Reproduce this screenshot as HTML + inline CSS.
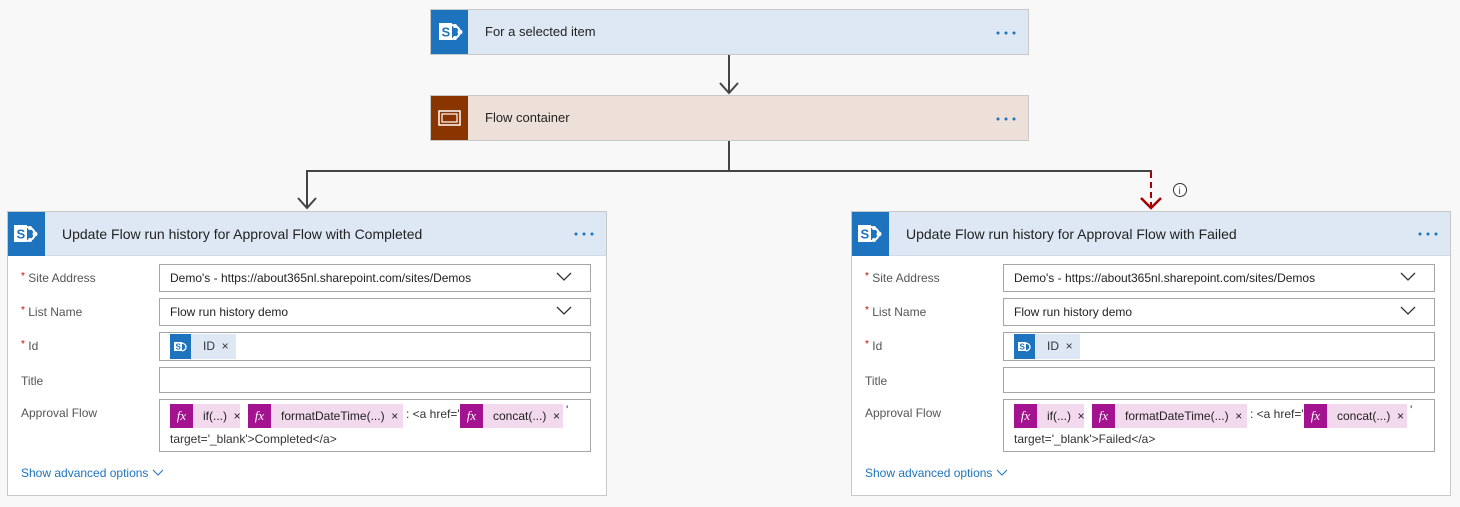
<!DOCTYPE html>
<html><head><meta charset="utf-8"><style>
*{margin:0;padding:0;box-sizing:border-box}
body{width:1460px;height:507px;background:#f8f8f8;position:relative;overflow:hidden;font-family:"Segoe UI","Liberation Sans",sans-serif;color:#333;font-size:12px}
.a{position:absolute}
.card{position:absolute;background:#fff;border:1px solid #c8c8c8}
.hdr{position:absolute;left:0;top:0;right:0;height:44px;background:#dde8f4;border-bottom:1px solid #d0dbe6}
.ic{position:absolute;left:0;top:0;width:37px;height:44px;background:#1e73be}
.ttl{position:absolute;left:54px;top:14px;font-size:14px;color:#222}
.dots{position:absolute;right:12px;top:20px;width:20px;height:4px}
.lbl{position:absolute;left:13px;font-size:12px;color:#555}
.lbl b{color:#c00;font-weight:normal;font-size:10px;vertical-align:top}
.inp{position:absolute;left:151px;width:432px;border:1px solid #a6a6a6;background:#fff}
.inp span.t{position:absolute;left:10px;top:6px;font-size:12px;color:#222}
.chev{position:absolute;right:18px;top:6px}
.chip{position:absolute;top:4px;height:24px;}
.fx{position:absolute;left:0;top:0;width:23px;height:24px;background:#a3128f;color:#fff;font-family:"Liberation Serif",serif;font-style:italic;font-size:13px;text-align:center;line-height:24px}
.cl{position:absolute;left:23px;top:0;height:24px;background:#f2d9ee;font-size:12px;line-height:24px;padding-left:10px;color:#222;white-space:nowrap}
.adv{position:absolute;left:13px;top:254px;color:#1e73be;font-size:12px}
</style></head><body>

<!-- top card -->
<div class="card" style="left:430px;top:9px;width:599px;height:46px;background:#dde8f4">
 <div class="ic" style="width:37px;height:44px"><svg width="37" height="44" viewBox="0 0 37 44"><rect x="8" y="13" width="13" height="17" fill="#fff"/><text x="10.5" y="26.5" font-family="Liberation Sans" font-weight="bold" font-size="13" fill="#1e73be">S</text><path d="M21 15 Q28 16 29 22 Q28 28 21 29" stroke="#fff" stroke-width="2" fill="none"/><circle cx="29" cy="22" r="2.5" fill="#fff"/><circle cx="24" cy="16" r="2" fill="#fff"/><circle cx="24" cy="28" r="2" fill="#fff"/></svg></div>
 <div class="ttl" style="top:14px;font-size:13px">For a selected item</div>
 <svg class="dots" style="top:21px"><circle cx="2" cy="2" r="1.5" fill="#1e73be"/><circle cx="10" cy="2" r="1.5" fill="#1e73be"/><circle cx="18" cy="2" r="1.5" fill="#1e73be"/></svg>
</div>
<div class="a" style="left:728px;top:55px;width:2px;height:38px;background:#444"></div>
<svg class="a" style="left:719px;top:82px" width="20" height="14"><path d="M1 1 L10 11 L19 1" stroke="#444" stroke-width="2" fill="none"/></svg>

<div class="card" style="left:430px;top:95px;width:599px;height:46px;background:#ede0d9">
 <div class="ic" style="background:#8a3500"><svg width="37" height="44"><rect x="8" y="15" width="21" height="14" stroke="#fff" stroke-width="1.5" fill="none"/><rect x="11" y="18" width="15" height="8" stroke="#fff" stroke-width="1.2" fill="none"/></svg></div>
 <div class="ttl" style="top:14px;font-size:13px">Flow container</div>
 <svg class="dots" style="top:21px"><circle cx="2" cy="2" r="1.5" fill="#1e73be"/><circle cx="10" cy="2" r="1.5" fill="#1e73be"/><circle cx="18" cy="2" r="1.5" fill="#1e73be"/></svg>
</div>
<div class="a" style="left:728px;top:141px;width:2px;height:30px;background:#444"></div>
<div class="a" style="left:306px;top:170px;width:846px;height:2px;background:#444"></div>
<div class="a" style="left:306px;top:170px;width:2px;height:38px;background:#444"></div>
<svg class="a" style="left:297px;top:197px" width="20" height="14"><path d="M1 1 L10 11 L19 1" stroke="#444" stroke-width="2" fill="none"/></svg>
<div class="a" style="left:1150px;top:172px;width:0;height:36px;border-left:2px dashed #a80000"></div>
<svg class="a" style="left:1140px;top:197px" width="22" height="14"><path d="M1 1 L11 11 L21 1" stroke="#a80000" stroke-width="2.5" fill="none"/></svg>
<svg class="a" style="left:1172px;top:182px" width="16" height="16"><circle cx="8" cy="8" r="6.5" stroke="#333" fill="#fff"/><text x="6.5" y="12" font-size="10" fill="#7a1a8f" font-family="Liberation Sans">i</text></svg>

<!-- left card -->
<div class="card" style="left:7px;top:211px;width:600px;height:285px">
 <div class="hdr"><div class="ic"><svg width="37" height="44" viewBox="0 0 37 44"><rect x="6" y="13" width="13" height="17" fill="#fff"/><text x="8.5" y="26.5" font-family="Liberation Sans" font-weight="bold" font-size="13" fill="#1e73be">S</text><path d="M19 15 Q26 16 27 22 Q26 28 19 29" stroke="#fff" stroke-width="2" fill="none"/><circle cx="27" cy="22" r="2.5" fill="#fff"/><circle cx="22" cy="16" r="2" fill="#fff"/><circle cx="22" cy="28" r="2" fill="#fff"/></svg></div>
 <div class="ttl" style="top:14px">Update Flow run history for Approval Flow with Completed</div><svg class="dots"><circle cx="2" cy="2" r="1.5" fill="#1e73be"/><circle cx="10" cy="2" r="1.5" fill="#1e73be"/><circle cx="18" cy="2" r="1.5" fill="#1e73be"/></svg></div>
 <div class="lbl" style="top:59px"><b>*</b> Site Address</div>
 <div class="inp" style="top:52px;height:28px"><span class="t">Demo's - https://about365nl.sharepoint.com/sites/Demos</span><svg class="chev" width="16" height="12"><path d="M1 2 L8 9 L15 2" stroke="#333" stroke-width="1.3" fill="none"/></svg></div>
 <div class="lbl" style="top:93px"><b>*</b> List Name</div>
 <div class="inp" style="top:86px;height:28px"><span class="t">Flow run history demo</span><svg class="chev" width="16" height="12"><path d="M1 2 L8 9 L15 2" stroke="#333" stroke-width="1.3" fill="none"/></svg></div>
 <div class="lbl" style="top:127px"><b>*</b> Id</div>
 <div class="inp" style="top:120px;height:29px"><div class="chip" style="left:10px;top:1px;width:66px;height:25px;background:#dde8f4"><div style="position:absolute;left:0;top:0;width:21px;height:25px;background:#1e73be"><svg width="21" height="25"><rect x="4" y="8" width="8" height="9" fill="#fff"/><text x="5.5" y="15.5" font-size="8" font-weight="bold" fill="#1e73be" font-family="Liberation Sans">S</text><path d="M12 9 Q16 10 16 13 Q16 16 12 17" stroke="#fff" stroke-width="1.3" fill="none"/></svg></div><span style="position:absolute;left:33px;top:5px">ID&nbsp; ×</span></div></div>
 <div class="lbl" style="top:162px">Title</div>
 <div class="inp" style="top:155px;height:26px"></div>
 <div class="lbl" style="top:194px">Approval Flow</div>
 <div class="inp" style="top:187px;height:53px">
  <div class="chip" style="left:10px"><div class="fx">fx</div><div class="cl" style="width:47px">if(...)&nbsp; ×</div></div>
  <div class="chip" style="left:88px"><div class="fx">fx</div><div class="cl" style="width:132px;padding-left:10px">formatDateTime(...)&nbsp; ×</div></div>
  <span class="a" style="left:246px;top:7px">: &lt;a href='</span>
  <div class="chip" style="left:300px"><div class="fx">fx</div><div class="cl" style="width:80px;padding-left:10px">concat(...)&nbsp; ×</div></div>
  <span class="a" style="left:406px;top:3px">'</span>
  <span class="a" style="left:10px;top:32px">target='_blank'&gt;Completed&lt;/a&gt;</span>
 </div>
 <div class="adv">Show advanced options <svg width="12" height="8"><path d="M1 1 L6 6 L11 1" stroke="#1e73be" fill="none"/></svg></div>
</div>

<!-- right card -->
<div class="card" style="left:851px;top:211px;width:600px;height:285px">
 <div class="hdr"><div class="ic"><svg width="37" height="44" viewBox="0 0 37 44"><rect x="6" y="13" width="13" height="17" fill="#fff"/><text x="8.5" y="26.5" font-family="Liberation Sans" font-weight="bold" font-size="13" fill="#1e73be">S</text><path d="M19 15 Q26 16 27 22 Q26 28 19 29" stroke="#fff" stroke-width="2" fill="none"/><circle cx="27" cy="22" r="2.5" fill="#fff"/><circle cx="22" cy="16" r="2" fill="#fff"/><circle cx="22" cy="28" r="2" fill="#fff"/></svg></div>
 <div class="ttl" style="top:14px">Update Flow run history for Approval Flow with Failed</div><svg class="dots"><circle cx="2" cy="2" r="1.5" fill="#1e73be"/><circle cx="10" cy="2" r="1.5" fill="#1e73be"/><circle cx="18" cy="2" r="1.5" fill="#1e73be"/></svg></div>
 <div class="lbl" style="top:59px"><b>*</b> Site Address</div>
 <div class="inp" style="top:52px;height:28px"><span class="t">Demo's - https://about365nl.sharepoint.com/sites/Demos</span><svg class="chev" width="16" height="12"><path d="M1 2 L8 9 L15 2" stroke="#333" stroke-width="1.3" fill="none"/></svg></div>
 <div class="lbl" style="top:93px"><b>*</b> List Name</div>
 <div class="inp" style="top:86px;height:28px"><span class="t">Flow run history demo</span><svg class="chev" width="16" height="12"><path d="M1 2 L8 9 L15 2" stroke="#333" stroke-width="1.3" fill="none"/></svg></div>
 <div class="lbl" style="top:127px"><b>*</b> Id</div>
 <div class="inp" style="top:120px;height:29px"><div class="chip" style="left:10px;top:1px;width:66px;height:25px;background:#dde8f4"><div style="position:absolute;left:0;top:0;width:21px;height:25px;background:#1e73be"><svg width="21" height="25"><rect x="4" y="8" width="8" height="9" fill="#fff"/><text x="5.5" y="15.5" font-size="8" font-weight="bold" fill="#1e73be" font-family="Liberation Sans">S</text><path d="M12 9 Q16 10 16 13 Q16 16 12 17" stroke="#fff" stroke-width="1.3" fill="none"/></svg></div><span style="position:absolute;left:33px;top:5px">ID&nbsp; ×</span></div></div>
 <div class="lbl" style="top:162px">Title</div>
 <div class="inp" style="top:155px;height:26px"></div>
 <div class="lbl" style="top:194px">Approval Flow</div>
 <div class="inp" style="top:187px;height:53px">
  <div class="chip" style="left:10px"><div class="fx">fx</div><div class="cl" style="width:47px">if(...)&nbsp; ×</div></div>
  <div class="chip" style="left:88px"><div class="fx">fx</div><div class="cl" style="width:132px;padding-left:10px">formatDateTime(...)&nbsp; ×</div></div>
  <span class="a" style="left:246px;top:7px">: &lt;a href='</span>
  <div class="chip" style="left:300px"><div class="fx">fx</div><div class="cl" style="width:80px;padding-left:10px">concat(...)&nbsp; ×</div></div>
  <span class="a" style="left:406px;top:3px">'</span>
  <span class="a" style="left:10px;top:32px">target='_blank'&gt;Failed&lt;/a&gt;</span>
 </div>
 <div class="adv">Show advanced options <svg width="12" height="8"><path d="M1 1 L6 6 L11 1" stroke="#1e73be" fill="none"/></svg></div>
</div>
</body></html>
